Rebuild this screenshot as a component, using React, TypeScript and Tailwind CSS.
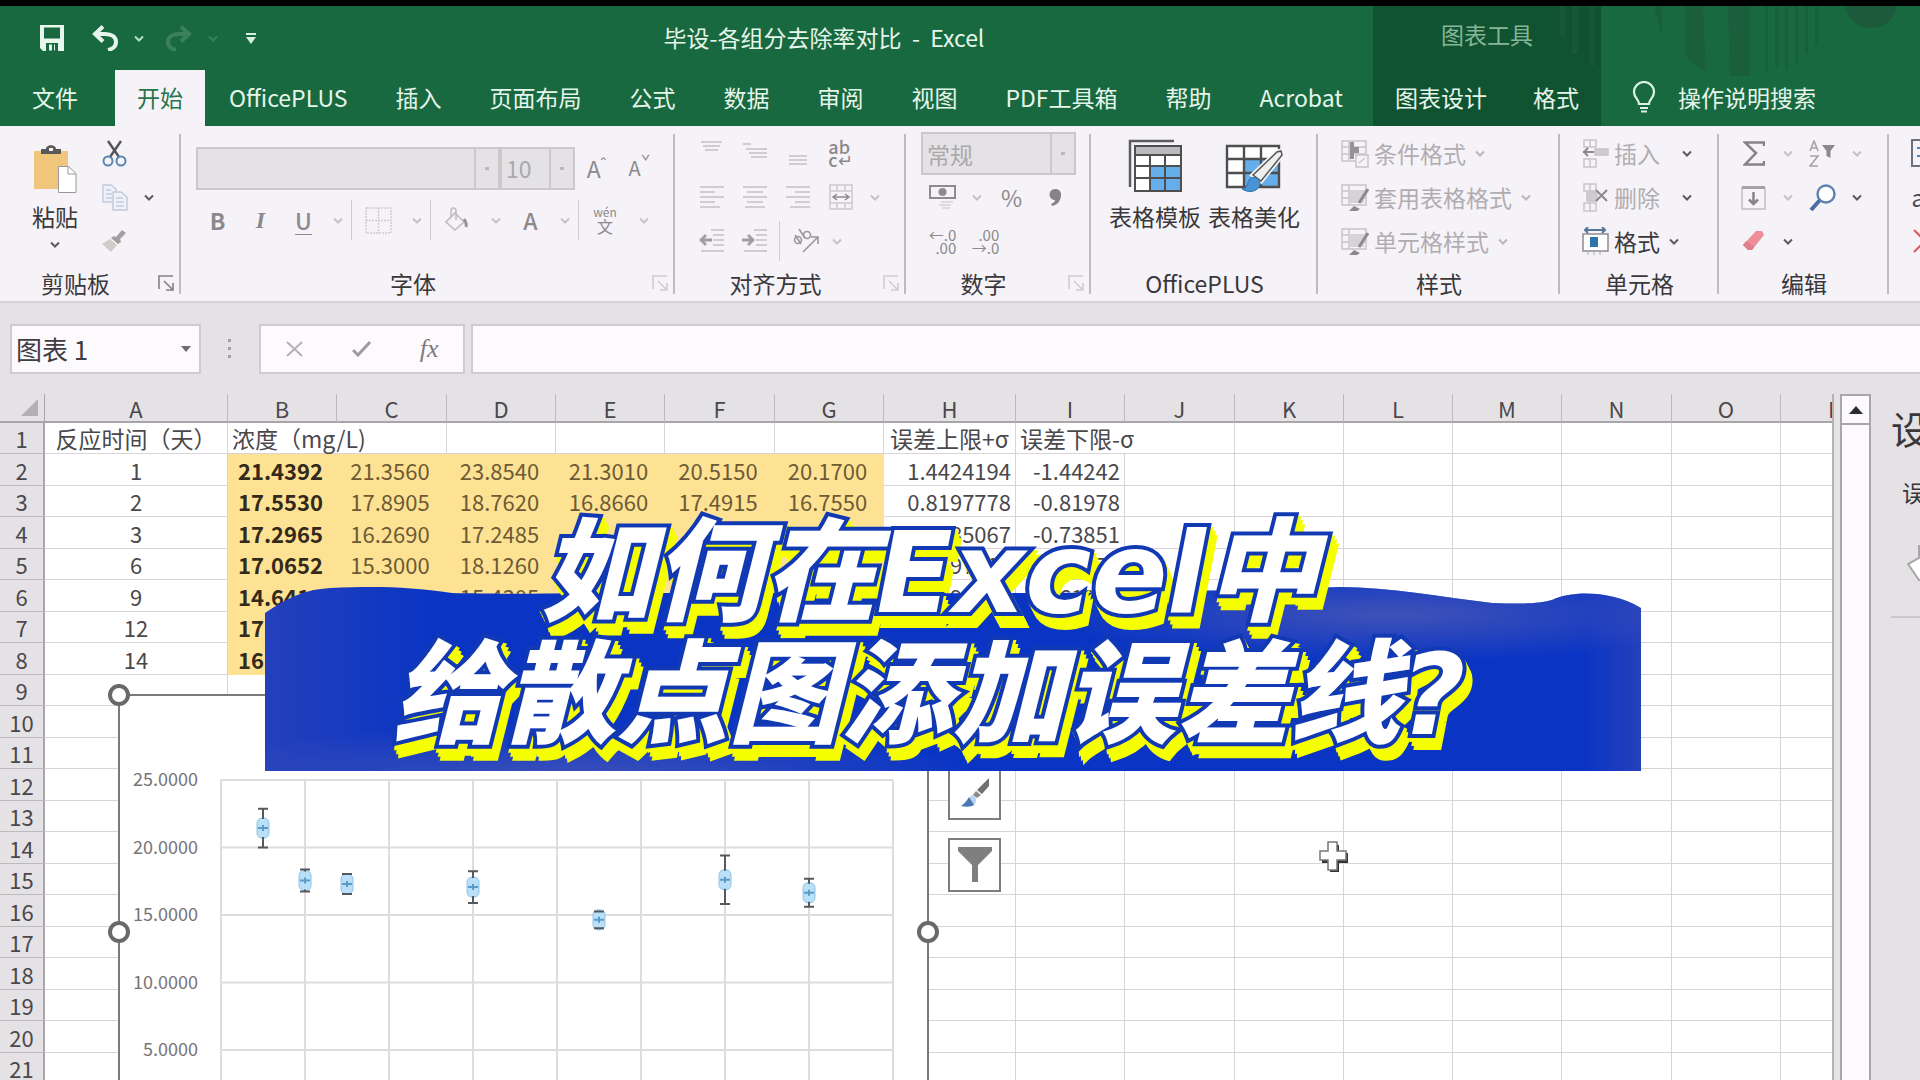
import React from "react";

type IconProps = { className?: string };

const columns = [
  { name: "A", width: "w-[183px]" },
  { name: "B", width: "w-[109px]" },
  { name: "C", width: "w-[110px]" },
  { name: "D", width: "w-[109px]" },
  { name: "E", width: "w-[109px]" },
  { name: "F", width: "w-[110px]" },
  { name: "G", width: "w-[109px]" },
  { name: "H", width: "w-[132px]" },
  { name: "I", width: "w-[109px]" },
  { name: "J", width: "w-[110px]" },
  { name: "K", width: "w-[109px]" },
  { name: "L", width: "w-[109px]" },
  { name: "M", width: "w-[109px]" },
  { name: "N", width: "w-[110px]" },
  { name: "O", width: "w-[109px]" },
  { name: "P", width: "w-[109px]" },
];

const cells: string[][] = [
  ["反应时间（天）", "浓度（mg/L)", "", "", "", "", "", "误差上限+σ", "误差下限-σ"],
  ["1", "21.4392", "21.3560", "23.8540", "21.3010", "20.5150", "20.1700", "1.4424194", "-1.44242"],
  ["2", "17.5530", "17.8905", "18.7620", "16.8660", "17.4915", "16.7550", "0.8197778", "-0.81978"],
  ["3", "17.2965", "16.2690", "17.2485", "", "", "", "0.7385067", "-0.73851"],
  ["6", "17.0652", "15.3000", "18.1260", "", "", "", "1.1797910", "-1.17979"],
  ["9", "14.6415", "13.8450", "15.4305", "", "", "", "0.6198927", "-0.61989"],
  ["12", "17.6120"],
  ["14", "16.6480"],
];

const points = [
  { day: 1, value: 21.4392, error: 1.44 },
  { day: 2, value: 17.553, error: 0.82 },
  { day: 3, value: 17.2965, error: 0.74 },
  { day: 6, value: 17.0652, error: 1.18 },
  { day: 9, value: 14.6415, error: 0.62 },
  { day: 12, value: 17.612, error: 1.79 },
  { day: 14, value: 16.648, error: 1.03 },
];

const tabs = ["插入", "页面布局", "公式", "数据", "审阅", "视图", "PDF工具箱", "帮助", "Acrobat"];

function Chevron({ className = "text-[#5c5a5e]" }: IconProps) {
  return (
    <svg viewBox="0 0 10 7" className={`h-[7px] w-[10px] shrink-0 ${className}`} fill="none" stroke="currentColor" strokeWidth="2">
      <path d="M1 1.5 5 5.5 9 1.5" />
    </svg>
  );
}

function SaveIcon() {
  return (
    <svg viewBox="0 0 24 26" className="h-[26px] w-6">
      <path d="M0 0h24v26H3l-3-3z" fill="#e8f7ee" />
      <path d="M4 2.5h16v11H4zM6 18h12v8H6z" fill="#18693f" />
      <path d="M9 19.5h3v6H9zM14 19.5h1v6h-1z" fill="#e8f7ee" />
    </svg>
  );
}

function UndoIcon({ className = "" }: IconProps) {
  return (
    <svg viewBox="0 0 26 26" className={`h-[26px] w-[26px] ${className}`} fill="none" stroke="currentColor" strokeWidth="4">
      <path d="M11 1.5 3 9l8 7.500M4 9h9c7 0 11 3 11 8 0 4-3 7-8 8" />
    </svg>
  );
}

function PasteIcon() {
  return (
    <svg viewBox="0 0 43 49" className="h-[49px] w-[43px]">
      <path d="M0 6h34v38H0z" fill="#efc67c" />
      <path d="M7 9V4h5c0-5 10-5 10 0h5v5z" fill="#595959" />
      <path d="M15 3h4v3h-4z" fill="#f6f3f8" />
      <path d="M24.5 21.5h10l7.500 7v19H24.500z" fill="#fff" stroke="#9a989a" />
      <path d="M34 21.500v7.500h8" fill="none" stroke="#9a989a" />
    </svg>
  );
}

function CutIcon() {
  return (
    <svg viewBox="0 0 26 27" className="h-[27px] w-[26px]" fill="none">
      <path d="m6 1 11 16M19 1 8 17" stroke="#555" strokeWidth="2.400" />
      <circle cx="6" cy="21" r="4.500" stroke="#5b86ad" strokeWidth="2" />
      <circle cx="19" cy="21" r="4.500" stroke="#5b86ad" strokeWidth="2" />
    </svg>
  );
}

function CopyIcon() {
  return (
    <svg viewBox="0 0 26 27" className="h-[27px] w-[26px]" fill="#eef1f8" stroke="#c3cadb" strokeWidth="1.500">
      <path d="M1 1h8l5 4v13H1z" />
      <path d="M4 6h5M4 10h6M4 14h6" />
      <path d="M11 8h8l6 5v13H11z" />
      <path d="M14 14h7M14 18h8M14 22h8" />
    </svg>
  );
}

function PainterIcon() {
  return (
    <svg viewBox="0 0 26 24" className="h-6 w-[26px]">
      <path d="m20 1 4 3-6 6 1 3-3 2-7-6 3-2 2 1z" fill="#a19fa1" />
      <path d="m8 10 7 6-6 7-9-8z" fill="#cfcdc6" />
    </svg>
  );
}

function BordersIcon() {
  return (
    <svg viewBox="0 0 27 27" className="h-[27px] w-[27px]" fill="none" stroke="#cfccd0" strokeWidth="1.500" strokeDasharray="2 1">
      <path d="M1 1h25v25H1zM13.500 1v25M1 13.500h25" />
    </svg>
  );
}

function FillIcon() {
  return (
    <svg viewBox="0 0 24 26" className="h-[26px] w-6" fill="none" stroke="#c0bdc1" strokeWidth="1.600">
      <path d="m10 6 9 9-9 8-9-8zM6 10V4c0-4 5-4 5 0v9" />
      <path d="M19 12c2 3 3 5 2 8" stroke="#959295" strokeWidth="3" />
    </svg>
  );
}

function LinesIcon({ kind }: { kind: string }) {
  const paths: Record<string, string> = {
    top: "M2 2h21M4 6h17M6 10h13",
    middle: "M1 4h8M4 9h21M7 13h18M9 17h16",
    bottom: "M4 16h18M4 20h18M4 24h18",
    left: "M1 3h24M1 8h15M1 13h24M1 18h15M1 23h20",
    center: "M1 3h24M5 8h16M1 13h24M5 18h16M3 23h20",
    right: "M1 3h24M10 8h15M1 13h24M10 18h15M5 23h20",
    outdent: "M12 2h13M14 7h11M14 12h11M14 17h11M2 23h23",
    indent: "M12 2h13M14 7h11M14 12h11M14 17h11M2 23h23",
  };
  return (
    <svg viewBox="0 0 26 26" className="h-[26px] w-[26px]" fill="none" stroke="#d0cdd1" strokeWidth="1.800">
      <path d={paths[kind]} />
      {kind === "outdent" && <path d="M13 12H2M7 7l-5 5 5 5" stroke="#a19ea2" strokeWidth="2.800" />}
      {kind === "indent" && <path d="M0 12h11M6 7l5 5-5 5" stroke="#a19ea2" strokeWidth="2.800" />}
    </svg>
  );
}

function MergeIcon() {
  return (
    <svg viewBox="0 0 24 26" className="h-[26px] w-6" fill="none" stroke="#ccc9cd" strokeWidth="1.500">
      <path d="M1 1h22v24H1zM1 7h22M1 19h22M8 1v6M16 1v6M8 19v6M16 19v6" />
      <path d="M4 13h16M8 10l-4 3 4 3M16 10l4 3-4 3" stroke="#8e8b8e" />
    </svg>
  );
}

function OrientationIcon() {
  return (
    <svg viewBox="0 0 26 26" className="h-[26px] w-[26px]" fill="none" stroke="#9b989b" strokeWidth="1.600">
      <path d="M10 24 25 9M18 9h7v7" />
      <circle cx="5" cy="12" r="3.500" />
      <path d="m2 7 6 9" />
      <circle cx="14" cy="7" r="3.500" />
      <path d="m6 1 6 9" />
    </svg>
  );
}

function MoneyIcon() {
  return (
    <svg viewBox="0 0 27 27" className="h-[27px] w-[27px]" fill="none" stroke="#8e8b8e" strokeWidth="2">
      <path d="M1 2h25v12H1z" />
      <circle cx="13.500" cy="8" r="4" fill="#8e8b8e" stroke="none" />
      <path d="M12 18h12M10 21h12M13 24h8" stroke="#dddadd" />
    </svg>
  );
}

function TemplateIcon() {
  return (
    <svg viewBox="0 0 54 54" className="h-[54px] w-[54px]" fill="none">
      <path d="M2 48V2h44" stroke="#5c5c5c" strokeWidth="2.500" />
      <path d="M7 7h46v45H7z" fill="#fff" stroke="#4e4e4e" strokeWidth="2" />
      <path d="M8 8h44v8H8z" fill="#bcbabc" />
      <path d="M22 27h30v24H22z" fill="#65aeea" />
      <path d="M7 16h46M7 27h46M7 39h46M22 16v36M37 16v36" stroke="#4e4e4e" strokeWidth="2" />
    </svg>
  );
}

function BeautifyIcon() {
  return (
    <svg viewBox="0 0 58 54" className="h-[54px] w-[58px]" fill="none">
      <path d="M2 7h52v41H2z" fill="#fff" />
      <path d="M19 20h35v28H19z" fill="#65aeea" />
      <path d="M2 7h52v41H2zM2 20h52M2 34h52M19 7v41M36 7v41" stroke="#4e4e4e" strokeWidth="2.400" />
      <path d="m28 36 24-23 4-1 1 4-21 26z" fill="#eee" stroke="#f6f3f8" strokeWidth="5" />
      <path d="m28 36 24-23 4-1 1 4-21 26z" fill="#eee" stroke="#555" strokeWidth="1.500" />
      <path d="M17 50c6-1 5-5 7-9 3-5 12-2 11 4-1 7-10 10-18 5z" fill="#4a93d6" stroke="#2d70ab" />
    </svg>
  );
}

function TableStyleIcon({ conditional = false }: { conditional?: boolean }) {
  return (
    <svg viewBox="0 0 29 29" className="h-[29px] w-[29px] shrink-0" fill="none" stroke="#c8c5c9" strokeWidth="1.500">
      <path d="M2 2h24v20H2zM2 8h24M2 15h24M9 2v20" />
      {conditional ? (
        <>
          <path d="M10 3h4v17h-4zM14 8h5v6h-5z" fill="#959296" stroke="none" />
          <path d="M16 16h12v12H16z" fill="#f6f3f8" />
          <path d="m19 24 6-5" />
        </>
      ) : (
        <>
          <path d="M9 7h15v13H9z" fill="#d6d3d6" stroke="none" />
          <path d="m28 6-9 14" stroke="#8c898c" strokeWidth="3" />
          <path d="m9 28 5-5 6 3-3 2z" fill="#8c898c" stroke="none" />
        </>
      )}
    </svg>
  );
}

function CellsIcon({ kind }: { kind: string }) {
  if (kind === "format") {
    return (
      <svg viewBox="0 0 27 29" className="h-[29px] w-[27px] shrink-0" fill="none">
        <path d="M3 3h20M6 0 3 3l3 3M20 0l3 3-3 3" stroke="#54779b" strokeWidth="2" />
        <path d="M1 7h25v17H1z" fill="#fff" stroke="#8e8b8e" strokeWidth="1.500" />
        <path d="M8 10h8v10H8z" fill="#2f72a8" />
        <path d="M6 24v4M12 24v4M18 24v4" stroke="#aaa" />
      </svg>
    );
  }
  return (
    <svg viewBox="0 0 27 29" className="h-[29px] w-[27px] shrink-0" fill="none" stroke="#c8c5c9" strokeWidth="1.500">
      <path d="M2 1h12v7H2zM8 1v7M2 20h12v8H2zM8 20v8" />
      {kind === "insert" ? (
        <>
          <path d="M13 10h13v6H13z" fill="#cfccd0" />
          <path d="M12 13H1M6 9l-4 4 4 4" stroke="#8c898c" strokeWidth="2" />
        </>
      ) : (
        <>
          <path d="M5 9h10v9H5z" fill="#cfccd0" />
          <path d="m14 7 11 11M25 7 14 18" stroke="#8c898c" strokeWidth="2" />
        </>
      )}
    </svg>
  );
}

function SumIcon() {
  return (
    <svg viewBox="0 0 22 25" className="h-[25px] w-[22px]" fill="none" stroke="#868386" strokeWidth="2.500">
      <path d="M21 5V1.500H2L13 12 2 23.500h19V20" />
    </svg>
  );
}

function SortFilterIcon() {
  return (
    <svg viewBox="0 0 27 27" className="h-[27px] w-[27px]" fill="none" stroke="#a5a2a5" strokeWidth="1.600">
      <path d="m1 11 4-10 4 10M2.500 8h5M1 16h8L1 26h8" />
      <path d="M13 5h13l-4.500 6v7l-4-2v-5z" fill="#8c898c" stroke="none" />
    </svg>
  );
}

function FillDownIcon() {
  return (
    <svg viewBox="0 0 25 25" className="h-[25px] w-[25px]" fill="none" stroke="#c0bdc1" strokeWidth="1.500">
      <path d="M1 3h23v21H1z" />
      <path d="M1 2.500h23" stroke="#a5a2a5" strokeWidth="3" />
      <path d="M12.500 7v12M8 14.500l4.500 4.500 4.500-4.500" stroke="#868386" strokeWidth="2.500" />
    </svg>
  );
}

function FindIcon() {
  return (
    <svg viewBox="0 0 27 27" className="h-[27px] w-[27px]" fill="none">
      <path d="M11 16 2 26" stroke="#4a6ea3" strokeWidth="4" />
      <circle cx="17" cy="10" r="8.500" fill="#fff" stroke="#5c80b0" strokeWidth="2.400" />
    </svg>
  );
}

function EraserIcon() {
  return (
    <svg viewBox="0 0 24 22" className="h-[22px] w-6">
      <path d="M14 1h6l2 4L10 20H6l-5-5z" fill="#ec8f98" />
      <path d="m4 11 8 6-2 3H6l-5-5z" fill="#e07f8a" />
    </svg>
  );
}

function LauncherIcon({ dim }: { dim: boolean }) {
  return (
    <svg viewBox="0 0 17 16" className="h-4 w-[17px]" fill="none" stroke={dim ? "#d0cdd1" : "#848184"} strokeWidth="1.600">
      <path d="M1 14V1h14M6 6l9 9M15 8v7H8" />
    </svg>
  );
}

function BulbIcon() {
  return (
    <svg viewBox="0 0 24 32" className="h-8 w-6" fill="none" stroke="#dff2e6" strokeWidth="2.200">
      <path d="M7 23c0-5-5-6-5-12a10 10 0 0 1 20 0c0 6-5 7-5 12zM8 27h8M9 30.500h6" />
    </svg>
  );
}

function Group({ label, width, launcher, dim = true, children }: {
  label: string;
  width: string;
  launcher?: boolean;
  dim?: boolean;
  children: React.ReactNode;
}) {
  return (
    <section aria-label={label} className={`relative flex shrink-0 flex-col ${width}`}>
      <div className="h-[132px]">{children}</div>
      <div className="mt-1 flex items-center">
        <h2 className="flex-1 text-center text-[#3a383b]">{label}</h2>
        {launcher && (
          <button type="button" aria-label={`${label}设置`} className="mr-[6px] ml-[7px]">
            <LauncherIcon dim={dim} />
          </button>
        )}
      </div>
      <span className="absolute top-[3px] right-0 h-40 w-[2px] bg-[#bfbcc0]" />
    </section>
  );
}

function Tool({ label, className = "w-[43px]", children }: { label: string; className?: string; children: React.ReactNode }) {
  return (
    <button type="button" aria-label={label} className={`flex h-11 shrink-0 items-center justify-center ${className}`}>
      {children}
    </button>
  );
}

function RowTool({ label, icon, active, wide }: { label: string; icon: React.ReactNode; active?: boolean; wide?: boolean }) {
  return (
    <button type="button" className={`flex h-11 items-center whitespace-nowrap ${active ? "text-[#3a383b]" : "text-[#b0adb1]"}`}>
      {icon}
      <span className="ml-[5px]">{label}</span>
      <Chevron className={`${wide ? "ml-[22px]" : "ml-[9px]"} ${active || wide ? "text-[#5c5a5e]" : "text-[#b9b6ba]"}`} />
    </button>
  );
}

function Combo({ label, value, className }: { label: string; value: string; className: string }) {
  return (
    <label className={`relative flex h-[43px] border-2 border-[#cbc8cc] bg-[#e4e2e5] text-[#aba8ac] ${className}`}>
      <span className="sr-only">{label}</span>
      <select disabled className="w-full appearance-none bg-transparent pl-1 opacity-100 outline-none">
        <option>{value}</option>
      </select>
      <span className="absolute inset-y-0 right-0 flex w-6 items-center justify-center border-l-2 border-[#cbc8cc]">
        <span className="h-[3px] w-1 bg-[#bbb8bc]" />
      </span>
    </label>
  );
}

function Header() {
  return (
    <header className="relative flex h-[120px] bg-[#18693f] text-[#e6f5eb]">
      <svg viewBox="0 0 300 70" className="absolute top-0 right-[60px] h-[70px] w-[300px]" fill="#1c5a3b">
        <path d="M0 0h5v35l-5-5zM12 0h6v48h-6zM30 0h4v62l-4-6zM94 0h8v30zM125 0h18l3 66-21-16zM168 0h22v72h-20z" opacity=".7" />
        <path d="M205 0h3v66h-3zM215 0h3v62h-3zM225 0h3v64h-3zM235 0h3v58h-3zM245 0h3v48h-3zM255 0h3v40h-3z" opacity=".7" />
      </svg>
      <svg viewBox="0 0 50 24" className="absolute top-0 right-[24px] h-6 w-[50px]">
        <path d="M0 0h50a25 22 0 0 1-50 0z" fill="#1c5a3b" />
      </svg>
      <div className="flex w-[1373px] shrink-0 flex-col">
        <div className="flex h-16 items-center">
          <div className="flex w-[275px] items-center pl-10">
            <button type="button" aria-label="保存"><SaveIcon /></button>
            <button type="button" aria-label="撤消" className="ml-7"><UndoIcon /></button>
            <button type="button" aria-label="撤消列表" className="ml-4"><Chevron className="text-[#b5dcc4]" /></button>
            <button type="button" aria-label="恢复" className="ml-[22px]"><UndoIcon className="-scale-x-100 text-[#3a8159]" /></button>
            <button type="button" aria-label="恢复列表" className="ml-4"><Chevron className="text-[#3a8159]" /></button>
            <button type="button" aria-label="自定义快速访问工具栏" className="ml-7">
              <svg viewBox="0 0 10 11" className="h-[11px] w-[10px]" fill="#d8efe0">
                <path d="M0 0h10v2H0zM0 4h10l-5 7z" />
              </svg>
            </button>
          </div>
          <h1 className="flex-1 pb-[2px] text-center whitespace-pre">毕设-各组分去除率对比{"  -  "}Excel</h1>
        </div>
        <nav aria-label="功能区选项卡" className="flex h-14 whitespace-nowrap">
          <a href="#file" className="flex w-[115px] items-center pb-[2px] pl-8">文件</a>
          <a href="#home" className="flex items-center bg-[#f6f3f8] px-[22px] pb-[2px] text-[#28744c]">开始</a>
          <a href="#officeplus" className="flex items-center px-6 pb-[2px]">OfficePLUS</a>
          {tabs.map((tab) => (
            <a key={tab} href={`#${tab}`} className="flex items-center px-6 pb-[2px]">{tab}</a>
          ))}
        </nav>
      </div>
      <div className="flex w-[228px] shrink-0 flex-col bg-[#10512f]/90">
        <p className="flex h-16 items-center justify-center pb-2 text-[#86b598]">
          <span>图表工具</span>
        </p>
        <nav aria-label="图表工具" className="flex h-14 justify-between px-[22px] pb-[2px] whitespace-nowrap">
          <a href="#chart-design" className="flex items-center">图表设计</a>
          <a href="#chart-format" className="flex items-center">格式</a>
        </nav>
      </div>
      <button type="button" className="mt-auto ml-[31px] flex h-14 items-center gap-[22px] pb-[2px] whitespace-nowrap">
        <BulbIcon />
        操作说明搜索
      </button>
    </header>
  );
}

function Ribbon() {
  const dimChevron = <Chevron className="text-[#c5c2c6]" />;
  const divider = <span className="h-10 w-px bg-[#cfccd0]" />;
  return (
    <div className="flex h-[175px] overflow-x-clip bg-[#f6f3f8] pt-[5px]">
      <Group label="剪贴板" width="w-[181px]" launcher dim={false}>
        <div className="flex">
          <button type="button" className="ml-8 flex w-[46px] flex-col items-center pt-[14px] text-[#3a383b]">
            <PasteIcon />
            <span className="mt-[6px] leading-8">粘贴</span>
            <Chevron className="mt-[9px] text-[#5c5a5e]" />
          </button>
          <div className="ml-[15px]">
            <Tool label="剪切"><CutIcon /></Tool>
            <div className="flex items-center gap-2">
              <Tool label="复制"><CopyIcon /></Tool>
              <Chevron />
            </div>
            <Tool label="格式刷"><PainterIcon /></Tool>
          </div>
        </div>
      </Group>

      <Group label="字体" width="w-[494px]" launcher>
        <div className="flex items-center pt-[15px] pl-[15px]">
          <Combo label="字体" value="" className="w-[304px]" />
          <Combo label="字号" value="10" className="w-[75px]" />
          <Tool label="增大字号"><span className="text-[#8c898d]">A<sup className="text-base">ˆ</sup></span></Tool>
          <Tool label="减小字号"><span className="text-xl text-[#8c898d]">A<sup className="text-base">ˇ</sup></span></Tool>
        </div>
        <div className="flex items-center pt-2 pl-[15px] text-[#8c898d]">
          <Tool label="加粗"><b>B</b></Tool>
          <Tool label="倾斜"><i className="font-['Liberation_Serif'] text-2xl font-bold">I</i></Tool>
          <Tool label="下划线"><u className="font-medium decoration-1 underline-offset-4">U</u></Tool>
          <Tool label="下划线样式" className="w-[26px]">{dimChevron}</Tool>
          {divider}
          <Tool label="边框" className="w-[52px]"><BordersIcon /></Tool>
          <Tool label="边框样式" className="w-[26px]">{dimChevron}</Tool>
          {divider}
          <Tool label="填充颜色" className="w-[52px]"><FillIcon /></Tool>
          <Tool label="填充颜色列表" className="w-[26px]">{dimChevron}</Tool>
          <Tool label="字体颜色"><span className="font-medium">A</span></Tool>
          <Tool label="字体颜色列表" className="w-[26px]">{dimChevron}</Tool>
          {divider}
          <Tool label="拼音" className="w-[52px]">
            <span className="flex flex-col text-xs leading-3"><span>wén</span><span className="text-base leading-4">文</span></span>
          </Tool>
          <Tool label="拼音列表" className="w-[26px]">{dimChevron}</Tool>
        </div>
      </Group>

      <Group label="对齐方式" width="w-[231px]" launcher>
        <div className="flex flex-col pl-[15px]">
          <div className="flex">
            <Tool label="顶端对齐"><LinesIcon kind="top" /></Tool>
            <Tool label="垂直居中"><LinesIcon kind="middle" /></Tool>
            <Tool label="底端对齐"><LinesIcon kind="bottom" /></Tool>
            <Tool label="自动换行"><span className="text-left text-lg leading-[13px] font-medium text-[#8c898d]">ab<br />c↵</span></Tool>
          </div>
          <div className="flex">
            <Tool label="左对齐"><LinesIcon kind="left" /></Tool>
            <Tool label="居中"><LinesIcon kind="center" /></Tool>
            <Tool label="右对齐"><LinesIcon kind="right" /></Tool>
            <Tool label="合并后居中"><MergeIcon /></Tool>
            <Tool label="合并选项" className="w-[26px]">{dimChevron}</Tool>
          </div>
          <div className="flex items-center">
            <Tool label="减少缩进量"><LinesIcon kind="outdent" /></Tool>
            <Tool label="增加缩进量"><LinesIcon kind="indent" /></Tool>
            <span className="ml-[3px] h-10 w-px bg-[#cfccd0]" />
            <Tool label="方向" className="w-[52px]"><OrientationIcon /></Tool>
            <Tool label="方向列表" className="w-[10px]">{dimChevron}</Tool>
          </div>
        </div>
      </Group>

      <Group label="数字" width="w-[185px]" launcher>
        <div className="pt-px pl-[15px]">
          <Combo label="数字格式" value="常规" className="w-[155px]" />
          <div className="flex text-[#8c898d]">
            <Tool label="会计数字格式"><MoneyIcon /></Tool>
            <Tool label="会计格式列表" className="w-[26px]">{dimChevron}</Tool>
            <Tool label="百分比样式"><span>%</span></Tool>
            <Tool label="千位分隔样式">
              <svg viewBox="0 0 12 17" className="h-[17px] w-3" fill="#868386"><path d="M6 0a5.500 5.500 0 0 1 6 6c0 6-4 10-9 11l-1-2c3-1 4-3 4-4a5.500 5.500 0 1 1 0-11z" /></svg>
            </Tool>
          </div>
          <div className="flex text-[15px] leading-[13px] text-[#8c898d]">
            <Tool label="增加小数位数"><span className="text-right">←.0<br />.00</span></Tool>
            <Tool label="减少小数位数"><span className="text-right">.00<br />→.0</span></Tool>
          </div>
        </div>
      </Group>

      <Group label="OfficePLUS" width="w-[227px]">
        <div className="flex justify-center gap-[7px] pt-2 whitespace-nowrap text-[#3a383b]">
          <button type="button" className="flex flex-col items-center">
            <TemplateIcon />
            <span className="mt-[7px] leading-8">表格模板</span>
          </button>
          <button type="button" className="flex flex-col items-center">
            <BeautifyIcon />
            <span className="mt-[7px] leading-8">表格美化</span>
          </button>
        </div>
      </Group>

      <Group label="样式" width="w-[242px]">
        <div className="pl-[22px]">
          <RowTool label="条件格式" icon={<TableStyleIcon conditional />} />
          <RowTool label="套用表格格式" icon={<TableStyleIcon />} />
          <RowTool label="单元格样式" icon={<TableStyleIcon />} />
        </div>
      </Group>

      <Group label="单元格" width="w-[159px]">
        <div className="pl-[22px]">
          <RowTool label="插入" icon={<CellsIcon kind="insert" />} wide />
          <RowTool label="删除" icon={<CellsIcon kind="delete" />} wide />
          <RowTool label="格式" icon={<CellsIcon kind="format" />} active />
        </div>
      </Group>

      <Group label="编辑" width="w-[170px]">
        <div className="pl-[13px]">
          <div className="flex">
            <Tool label="自动求和"><SumIcon /></Tool>
            <Tool label="求和列表" className="w-[26px]">{dimChevron}</Tool>
            <Tool label="排序和筛选"><SortFilterIcon /></Tool>
            <Tool label="排序列表" className="w-[26px]">{dimChevron}</Tool>
          </div>
          <div className="flex">
            <Tool label="填充"><FillDownIcon /></Tool>
            <Tool label="填充列表" className="w-[26px]">{dimChevron}</Tool>
            <Tool label="查找和选择"><FindIcon /></Tool>
            <Tool label="查找列表" className="w-[26px]"><Chevron /></Tool>
          </div>
          <div className="flex">
            <Tool label="清除"><EraserIcon /></Tool>
            <Tool label="清除列表" className="w-[26px]"><Chevron /></Tool>
          </div>
        </div>
      </Group>

      <div className="flex w-[60px] shrink-0 flex-col pl-[22px]">
        <Tool label="加载项" className="w-7">
          <svg viewBox="0 0 28 28" className="h-7 w-7" fill="none" stroke="#6a717a" strokeWidth="2">
            <path d="M1 1h26v26H1z" />
            <path d="M6 9h10M6 17h10" stroke="#4e86c4" />
          </svg>
        </Tool>
        <Tool label="替换" className="w-7"><span className="text-[#4a484b]">ab</span></Tool>
        <Tool label="删除内容" className="w-7">
          <svg viewBox="0 0 24 24" className="h-6 w-6" fill="none" stroke="#e0575c" strokeWidth="2">
            <path d="m1 1 22 22M23 1 1 23" />
          </svg>
        </Tool>
      </div>
    </div>
  );
}

function FormulaBar() {
  return (
    <div className="flex h-[93px] items-center border-t-2 border-[#d6d3d6] bg-[#e4e2e4] pl-[10px]">
      <div className="flex h-[50px] w-[191px] items-center border-2 border-[#cfccd0] bg-[#fdfafe] pr-2">
        <input aria-label="名称框" defaultValue="图表 1" className="w-full min-w-0 bg-transparent pl-1 text-[26px] text-[#3f3d40] outline-none" />
        <button type="button" aria-label="名称列表">
          <svg viewBox="0 0 10 6" className="h-[6px] w-[10px]" fill="#6f6c70"><path d="M0 0h10L5 6z" /></svg>
        </button>
      </div>
      <svg viewBox="0 0 4 20" className="mx-[27px] h-5 w-1" fill="#a3a0a4">
        <path d="M0 0h3v3H0zM0 8h3v3H0zM0 16h3v3H0z" />
      </svg>
      <div className="flex h-[50px] w-[206px] items-center justify-around border-2 border-[#cfccd0] bg-[#fdfafe]">
        <button type="button" aria-label="取消">
          <svg viewBox="0 0 17 16" className="h-4 w-[17px]" fill="none" stroke="#b5b2b6" strokeWidth="2"><path d="m1 1 15 14M16 1 1 15" /></svg>
        </button>
        <button type="button" aria-label="输入">
          <svg viewBox="0 0 19 16" className="h-4 w-[19px]" fill="none" stroke="#9f9ca0" strokeWidth="3"><path d="m1 9 5 5L18 1" /></svg>
        </button>
        <button type="button" aria-label="插入函数" className="font-['Liberation_Serif'] text-[26px] text-[#7e7b7f] italic">fx</button>
      </div>
      <input aria-label="编辑栏" className="ml-[6px] h-[50px] min-w-0 flex-1 border-2 border-r-0 border-[#cfccd0] bg-[#fdfafe] px-2 outline-none" />
    </div>
  );
}

function cellClass(row: number, col: number) {
  if (row === 0) {
    if (col === 0 || col === 7) return "border-r text-center text-[23px]";
    // long titles run over into the next column
    return col === 1 || col === 8 ? "pl-1 text-[23px]" : "border-r";
  }
  if (row < 8 && col >= 1 && col <= 6) {
    return col === 1
      ? "border-[#fde293] bg-[#fde293] pr-1 text-center font-bold text-[#33291a]"
      : "border-[#fde293] bg-[#fde293] pr-1 text-center text-[#6d5a36]";
  }
  if (col === 0) return "border-r text-center";
  return "border-r pr-1 text-right";
}

function Sheet() {
  return (
    <table className="w-[1890px] table-fixed border-separate border-spacing-0 bg-white text-[22px] leading-7 whitespace-nowrap text-[#4b484c]">
      <thead>
        <tr className="h-[29px] bg-[#e4e2e4]">
          <th className="w-[45px] border-r border-b-2 border-[#a9a6aa] p-0">
            <svg viewBox="0 0 17 17" className="ml-auto mr-[6px] h-[17px] w-[17px]" fill="#b3b0b4"><path d="M17 0v17H0z" /></svg>
          </th>
          {columns.map((col) => (
            <th key={col.name} scope="col" className={`border-r border-b-2 border-r-[#bdbabe] border-b-[#a9a6aa] p-0 font-normal ${col.width}`}>
              <span className="block h-[26px] leading-[26px]">{col.name}</span>
            </th>
          ))}
        </tr>
      </thead>
      <tbody>
        {Array.from({ length: 21 }, (_, row) => (
          <tr key={row} className="odd:h-[31px] even:h-8">
            <th scope="row" className="border-r-2 border-b border-r-[#a9a6aa] border-b-[#bdbabe] bg-[#e4e2e4] p-0 font-normal">{row + 1}</th>
            {columns.map((col, i) => (
              <td key={col.name} className={`border-b border-[#d9d4da] p-0 ${cellClass(row, i)}`}>
                {cells[row]?.[i] && <span className="block h-7">{cells[row][i]}</span>}
              </td>
            ))}
          </tr>
        ))}
      </tbody>
    </table>
  );
}

function Chart() {
  const px = (day: number) => 102 + day * 42;
  const py = (value: number) => 85 + (25 - value) * 13.5;
  return (
    <svg viewBox="0 0 810 474" role="img" aria-label="浓度散点图" className="absolute top-[301px] left-[119px] h-[474px] w-[810px] overflow-visible">
      <rect x="0" y="0" width="809" height="474" fill="#fff" stroke="#7c797c" strokeWidth="2" />
      <g stroke="#e0dbe0" strokeWidth="2">
        {[25, 20, 15, 10, 5, 0].map((v) => (
          <line key={v} x1="102" x2="774" y1={py(v)} y2={py(v)} />
        ))}
        {[0, 2, 4, 6, 8, 10, 12, 14, 16].map((d) => (
          <line key={d} x1={px(d)} x2={px(d)} y1="85" y2="422" />
        ))}
      </g>
      <g fill="#777478" fontSize="18" textAnchor="end">
        {[25, 20, 15, 10, 5].map((v) => (
          <text key={v} x="79" y={py(v) + 6}>{v.toFixed(4)}</text>
        ))}
      </g>
      {points.map(({ day, value, error }) => {
        const top = py(value + error);
        const bottom = py(value - error);
        return (
          <g key={day}>
            <rect x={px(day) - 6} y={py(value) - 10} width="12" height="20" rx="5" fill="#b9e0f8" stroke="#8fc3e6" />
            <path
              d={`M${px(day)} ${top}V${py(value) - 9}M${px(day)} ${py(value) + 9}V${bottom}M${px(day) - 5} ${top}h10M${px(day) - 5} ${bottom}h10`}
              stroke="#55585c"
              strokeWidth="2"
            />
            <path d={`M${px(day) - 5} ${py(value)}h10M${px(day)} ${py(value) - 3}v6`} stroke="#5b9cc6" strokeWidth="2" />
          </g>
        );
      })}
      <g fill="#fff" stroke="#6b686b" strokeWidth="4">
        <circle cx="0" cy="0" r="9" />
        <circle cx="0" cy="237" r="9" />
        <circle cx="809" cy="0" r="9" />
        <circle cx="809" cy="237" r="9" />
      </g>
    </svg>
  );
}

function ChartButtons() {
  const box = "flex h-[54px] w-[53px] items-center justify-center border-2 border-[#7f7c80] bg-white";
  return (
    <div className="absolute top-[300px] left-[948px] flex flex-col gap-[18px]">
      <button type="button" aria-label="图表元素" className={box}>
        <svg viewBox="0 0 30 30" className="h-[30px] w-[30px]"><path d="M11 0h8v11h11v8H19v11h-8V19H0v-8h11z" fill="#4d9a6c" /></svg>
      </button>
      <button type="button" aria-label="图表样式" className={box}>
        <svg viewBox="0 0 30 30" className="h-[30px] w-[30px]">
          <path d="M29 0v8l-7 8-5-4z" fill="#737073" />
          <path d="m16 13 5 4-4 3-4-3z" fill="#8d8a8d" />
          <path d="M12 17c4 1 6 5 2 10L1 28z" fill="#b9d4ec" />
          <path d="M1 28c4-2 6-6 8-9l5 8c-3 2-8 2-13 1z" fill="#4878ad" />
        </svg>
      </button>
      <button type="button" aria-label="图表筛选器" className={box}>
        <svg viewBox="0 0 36 36" className="h-9 w-9"><path d="M1 0h34v4L21 18v17h-6V18L1 4z" fill="#7f7f80" /></svg>
      </button>
    </div>
  );
}

function Banner() {
  return (
    <div className="absolute top-[508px] right-[279px] left-[265px] h-[263px]">
      <svg viewBox="0 0 1376 263" preserveAspectRatio="none" className="absolute inset-0 h-full w-full">
        <defs>
          <radialGradient id="glowLeft" cx=".22" cy="1.05" r=".3">
            <stop offset="0" stopColor="#4052b8" />
            <stop offset="1" stopColor="#4052b8" stopOpacity="0" />
          </radialGradient>
          <radialGradient id="glowRight" cx=".82" cy=".15" r=".25">
            <stop offset="0" stopColor="#4052b8" />
            <stop offset="1" stopColor="#4052b8" stopOpacity="0" />
          </radialGradient>
          <linearGradient id="edges">
            <stop offset="0" stopColor="#2440bc" />
            <stop offset=".12" stopColor="#0a35c4" />
            <stop offset=".96" stopColor="#0a35c4" />
            <stop offset="1" stopColor="#2440bc" />
          </linearGradient>
        </defs>
        {["url(#edges)", "url(#glowLeft)", "url(#glowRight)"].map((fill) => (
          <path
            key={fill}
            fill={fill}
            d="M0 105C25 88 40 82 65 80c50-2 80-1 122 5 80 2 250-1 450 0 180 1 300-2 438-6 50 0 100 10 152 16 30 1 45 1 60-3 20-10 62-9 89 8v163H0z"
          />
        ))}
      </svg>
      <p className="relative pt-1 pr-12 text-center font-['DejaVu_Sans','Noto_Sans_CJK_SC',sans-serif] text-[112px] leading-[122px] font-black whitespace-nowrap text-white italic [filter:drop-shadow(2px_4px_0_#f6ff00)_drop-shadow(4px_8px_0_#f6ff00)] [paint-order:stroke_fill] [-webkit-text-stroke:8px_#1239b4]">
        如何在Excel中
        <br />
        给散点图添加误差线?
      </p>
    </div>
  );
}

export default function App() {
  return (
    <div className="relative flex h-screen flex-col overflow-hidden bg-[#e4e2e4] font-['Noto_Sans_CJK_SC',sans-serif] text-[23px] leading-8">
      <div className="h-[6px] shrink-0 bg-black" />
      <Header />
      <Ribbon />
      <FormulaBar />
      <main className="flex min-h-0 flex-1">
        <div className="relative min-w-0 flex-1 overflow-hidden border-r-2 border-[#b5b2b6]">
          <Sheet />
          <Chart />
          <ChartButtons />
          <svg viewBox="0 0 30 32" className="absolute top-[447px] left-[1319px] h-8 w-[30px]">
            <path d="M11 4h9v8h9v10h-9v9h-9v-9H3V12h8z" fill="#333" />
            <path d="M9 1h9v9h9v9h-9v10H9V19H1v-9h8z" fill="#fff" stroke="#777" strokeWidth="1.500" />
          </svg>
        </div>
        <div className="ml-[6px] flex w-[31px] shrink-0 flex-col border-x-2 border-[#a9a6aa] bg-[#fdfafe]">
          <button type="button" aria-label="向上滚动" className="flex h-[31px] items-center justify-center border-y-2 border-[#a9a6aa]">
            <svg viewBox="0 0 14 8" className="h-2 w-[14px]" fill="#2b2a2c"><path d="M7 0l7 8H0z" /></svg>
          </button>
        </div>
        <aside aria-label="设置误差线格式" className="w-[49px] shrink-0 overflow-hidden whitespace-nowrap text-[#3a383b]">
          <h2 className="pt-[10px] pl-5 text-[38px] leading-[48px]">设置误差线格式</h2>
          <p className="mt-6 pl-[31px]">误差线选项</p>
          <svg viewBox="0 0 40 40" className="mt-9 ml-9 h-10 w-10" fill="#fff" stroke="#a9a6aa" strokeWidth="2">
            <path d="M12 2v12L1 20l11 16h20V2z" />
          </svg>
          <hr className="mt-8 ml-5 border-t-2 border-[#cbc8cc]" />
        </aside>
      </main>
      <Banner />
    </div>
  );
}
